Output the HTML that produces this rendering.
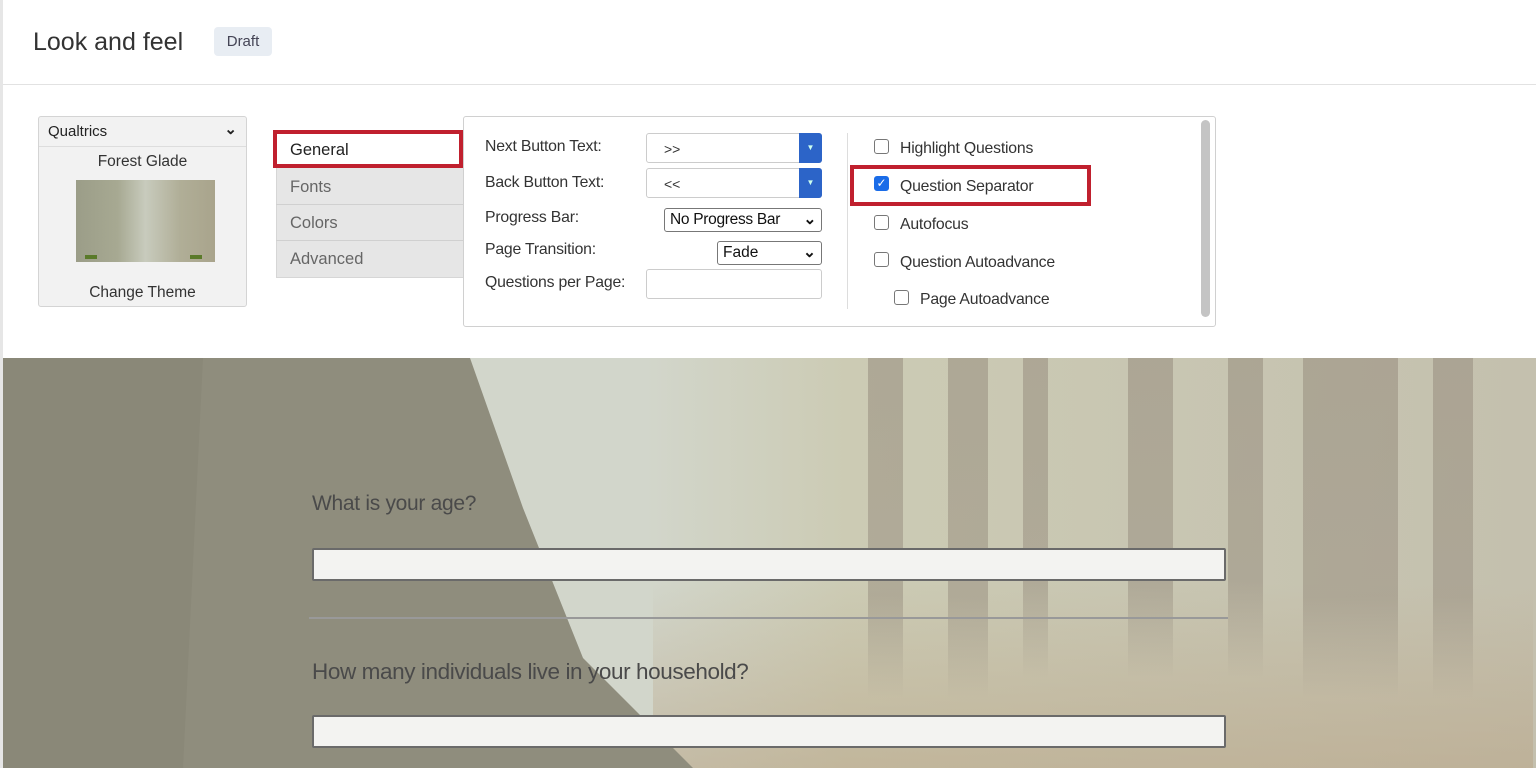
<!DOCTYPE html>
<html><head><meta charset="utf-8"><style>
*{box-sizing:border-box;margin:0;padding:0}
body{width:1536px;height:768px;overflow:hidden;background:#fff;font-family:"Liberation Sans",sans-serif;position:relative;color:#333}
.abs{position:absolute}
.lbl{font-size:15.8px;color:#333;letter-spacing:-0.2px}
.cb{width:15px;height:15px;border:1px solid #777;border-radius:3px;background:#fff;position:absolute}
.tr{position:absolute;top:0;background:linear-gradient(180deg,rgba(150,140,125,.55) 0%,rgba(150,140,125,.5) 70%,rgba(150,140,125,0) 100%)}
</style></head><body>
<div class="abs" style="left:0;top:0;width:3px;height:768px;background:#e6e6e6"></div>
<div class="abs" style="left:33px;top:28px;font-size:25px;color:#333">Look and feel</div>
<div class="abs" style="left:214px;top:27px;width:58px;height:29px;background:#e8edf3;border-radius:4px;font-size:15px;color:#445;line-height:29px;text-align:center">Draft</div>
<div class="abs" style="left:3px;top:84px;width:1533px;height:1px;background:#e2e2e2"></div>

<div class="abs" style="left:38px;top:116px;width:209px;height:191px;background:#f2f2f2;border:1px solid #d4d4d4;border-radius:3px">
 <div style="height:30px;border-bottom:1px solid #ddd;font-size:15px;color:#222;padding:6px 9px">Qualtrics<span style="position:absolute;right:9px;top:3px;font-size:15px;font-weight:bold">&#8964;</span></div>
 <div style="text-align:center;font-size:15.5px;margin-top:6px;color:#333">Forest Glade</div>
 <div style="position:absolute;left:37px;top:63px;width:139px;height:82px;background:linear-gradient(90deg,#9b9d88 0%,#a7a992 30%,#c8cbbd 50%,#b0ae97 75%,#a9a48c 100%)">
  <div style="position:absolute;left:9px;top:75px;width:12px;height:4px;background:#5a7a2a"></div>
  <div style="position:absolute;left:114px;top:75px;width:12px;height:4px;background:#5a7a2a"></div>
 </div>
 <div style="position:absolute;bottom:4px;width:100%;text-align:center;font-size:15.5px;color:#333">Change Theme</div>
</div>

<div class="abs" style="left:276px;top:131px;width:188px;height:147px;background:#e6e6e6;border:1px solid #d6d6d6"></div>
<div class="abs" style="left:276px;top:204px;width:188px;height:1px;background:#d0d0d0"></div>
<div class="abs" style="left:276px;top:240px;width:188px;height:1px;background:#d0d0d0"></div>
<div class="abs" style="left:273px;top:130px;width:190px;height:38px;background:#fff;border:4px solid #c0202e"></div>
<div class="abs" style="left:290px;top:141px;font-size:16.5px;color:#222">General</div>
<div class="abs" style="left:290px;top:178px;font-size:16.5px;color:#666">Fonts</div>
<div class="abs" style="left:290px;top:214px;font-size:16.5px;color:#666">Colors</div>
<div class="abs" style="left:290px;top:250px;font-size:16.5px;color:#666">Advanced</div>

<div class="abs" style="left:463px;top:116px;width:753px;height:211px;background:#fff;border:1px solid #d0d0d0;border-radius:3px"></div>
<div class="abs" style="left:1201px;top:120px;width:9px;height:197px;background:#c4c4c4;border-radius:5px"></div>
<div class="abs" style="left:847px;top:133px;width:1px;height:176px;background:#ddd"></div>
<div class="abs lbl" style="left:485px;top:138px">Next Button Text:</div>
<div class="abs lbl" style="left:485px;top:174px">Back Button Text:</div>
<div class="abs lbl" style="left:485px;top:209px">Progress Bar:</div>
<div class="abs lbl" style="left:485px;top:241px">Page Transition:</div>
<div class="abs lbl" style="left:485px;top:274px">Questions per Page:</div>
<div class="abs" style="left:646px;top:133px;width:176px;height:30px;border:1px solid #ccc;border-radius:3px;font-size:14px;padding:7px 17px">&gt;&gt;</div>
<div class="abs" style="left:799px;top:133px;width:23px;height:30px;background:#2c64c8;border-radius:0 3px 3px 0;color:#cfe;font-size:8px;text-align:center;line-height:30px">&#9660;</div>
<div class="abs" style="left:646px;top:168px;width:176px;height:30px;border:1px solid #ccc;border-radius:3px;font-size:14px;padding:7px 17px">&lt;&lt;</div>
<div class="abs" style="left:799px;top:168px;width:23px;height:30px;background:#2c64c8;border-radius:0 3px 3px 0;color:#cfe;font-size:8px;text-align:center;line-height:30px">&#9660;</div>
<div class="abs" style="left:664px;top:208px;width:158px;height:24px;border:1px solid #777;border-radius:3px;font-size:15.5px;padding:2px 5px;color:#111;letter-spacing:-0.3px">No Progress Bar<span style="position:absolute;right:5px;top:1px;font-weight:bold">&#8964;</span></div>
<div class="abs" style="left:717px;top:241px;width:105px;height:24px;border:1px solid #777;border-radius:3px;font-size:15.5px;padding:2px 5px;color:#111">Fade<span style="position:absolute;right:5px;top:1px;font-weight:bold">&#8964;</span></div>
<div class="abs" style="left:646px;top:269px;width:176px;height:30px;border:1px solid #ccc;border-radius:3px"></div>

<div class="cb" style="left:874px;top:139px"></div><div class="abs lbl" style="left:900px;top:140px">Highlight Questions</div>
<div class="abs" style="left:850px;top:165px;width:241px;height:41px;border:4px solid #c0202e"></div>
<div class="cb" style="left:874px;top:176px;background:#1a6ce8;border-color:#1a6ce8;color:#fff;font-size:12px;line-height:13px;text-align:center">&#10003;</div><div class="abs lbl" style="left:900px;top:178px">Question Separator</div>
<div class="cb" style="left:874px;top:215px"></div><div class="abs lbl" style="left:900px;top:216px">Autofocus</div>
<div class="cb" style="left:874px;top:252px"></div><div class="abs lbl" style="left:900px;top:254px">Question Autoadvance</div>
<div class="cb" style="left:894px;top:290px"></div><div class="abs lbl" style="left:920px;top:291px">Page Autoadvance</div>

<div class="abs" style="left:3px;top:358px;width:1533px;height:410px;overflow:hidden;background:linear-gradient(90deg,#d2d6cb 0%,#d2d6cb 42%,#cccbb4 55%,#c8c6b2 75%,#c4c0ae 100%)">
 <div class="abs" style="left:650px;top:0;width:880px;height:410px;background:linear-gradient(180deg,rgba(0,0,0,0) 55%,rgba(185,165,135,0.55) 100%)"></div>
 <div class="tr" style="left:865px;width:35px;height:340px"></div>
 <div class="tr" style="left:945px;width:40px;height:340px"></div>
 <div class="tr" style="left:1020px;width:25px;height:320px"></div>
 <div class="tr" style="left:1125px;width:45px;height:320px"></div>
 <div class="tr" style="left:1225px;width:35px;height:320px"></div>
 <div class="tr" style="left:1300px;width:95px;height:340px"></div>
 <div class="tr" style="left:1430px;width:40px;height:340px"></div>
 <svg class="abs" style="left:0;top:0" width="760" height="410"><polygon points="0,0 467,0 520,150 580,300 690,410 0,410" fill="#8f8d7d"/><polygon points="0,0 200,0 180,410 0,410" fill="#878575" opacity=".6"/></svg>
</div>
<div class="abs" style="left:312px;top:492px;font-size:21px;color:#4a4a4a;letter-spacing:-0.3px">What is your age?</div>
<div class="abs" style="left:312px;top:548px;width:914px;height:33px;background:#f3f3f1;border:2px solid #6a6a6a;border-radius:2px"></div>
<div class="abs" style="left:309px;top:617px;width:919px;height:2px;background:#999"></div>
<div class="abs" style="left:312px;top:659px;font-size:22.5px;color:#4a4a4a;letter-spacing:-0.4px">How many individuals live in your household?</div>
<div class="abs" style="left:312px;top:715px;width:914px;height:33px;background:#f3f3f1;border:2px solid #6a6a6a;border-radius:2px"></div>
</body></html>
